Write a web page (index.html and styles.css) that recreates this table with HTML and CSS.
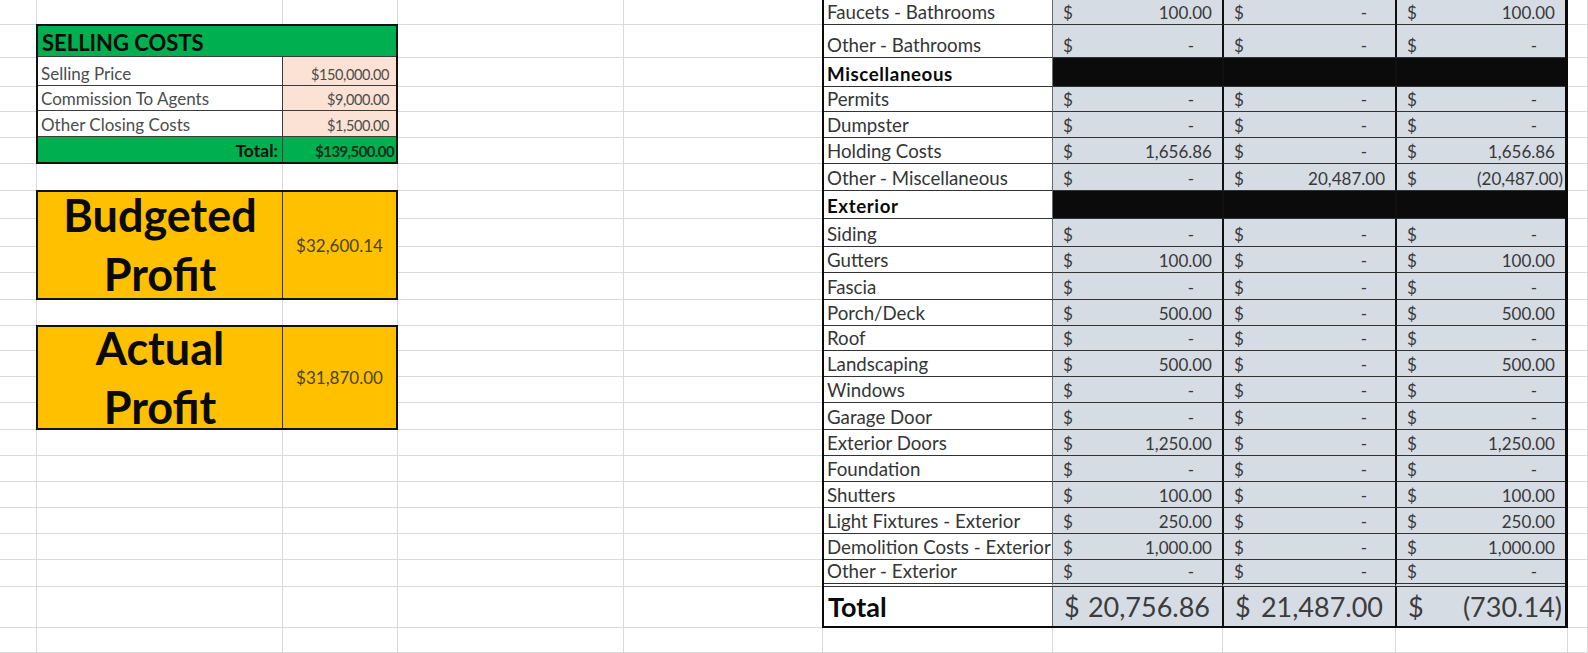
FILE: index.html
```html
<!DOCTYPE html>
<html>
<head>
<meta charset="utf-8">
<link rel="stylesheet" href="styles.css">
</head>
<body>
<div class="sheet">
  <div class="layer rowlines">
    <i></i><i></i><i></i><i></i><i></i><i></i><i></i><i></i><i></i><i></i><i></i><i></i>
    <i></i><i></i><i></i><i></i><i></i><i></i><i></i><i></i><i></i><i></i><i></i><i></i>
  </div>
  <div class="layer collines">
    <i></i><i></i><i></i><i></i><i></i><i></i><i></i><i></i><i></i><i></i>
  </div>
  <div class="layer content">
    <div class="selling">
      <div class="s-head">SELLING COSTS</div>
      <div class="s-lab">Selling Price</div><div class="s-val">$150,000.00</div>
      <div class="s-lab">Commission To Agents</div><div class="s-val">$9,000.00</div>
      <div class="s-lab">Other Closing Costs</div><div class="s-val">$1,500.00</div>
      <div class="s-lab s-tot">Total:</div><div class="s-val s-totval">$139,500.00</div>
    </div>

    <div class="profit budgeted">
      <div class="p-lab">Budgeted<br>Profit</div>
      <div class="p-val">$32,600.14</div>
    </div>

    <div class="profit actual">
      <div class="p-lab">Actual<br>Profit</div>
      <div class="p-val">$31,870.00</div>
    </div>

    <div class="costs">
      <div class="l">Faucets - Bathrooms</div>
      <div class="v k1"><span>$</span><span>100.00</span></div>
      <div class="v"><span>$</span><span class="dash">-</span></div>
      <div class="v"><span>$</span><span>100.00</span></div>

      <div class="l">Other - Bathrooms</div>
      <div class="v k1"><span>$</span><span class="dash">-</span></div>
      <div class="v"><span>$</span><span class="dash">-</span></div>
      <div class="v"><span>$</span><span class="dash">-</span></div>

      <div class="l sec">Miscellaneous</div>
      <div class="blk k1"></div><div class="blk"></div><div class="blk"></div>

      <div class="l">Permits</div>
      <div class="v k1"><span>$</span><span class="dash">-</span></div>
      <div class="v"><span>$</span><span class="dash">-</span></div>
      <div class="v"><span>$</span><span class="dash">-</span></div>

      <div class="l">Dumpster</div>
      <div class="v k1"><span>$</span><span class="dash">-</span></div>
      <div class="v"><span>$</span><span class="dash">-</span></div>
      <div class="v"><span>$</span><span class="dash">-</span></div>

      <div class="l">Holding Costs</div>
      <div class="v k1"><span>$</span><span>1,656.86</span></div>
      <div class="v"><span>$</span><span class="dash">-</span></div>
      <div class="v"><span>$</span><span>1,656.86</span></div>

      <div class="l">Other - Miscellaneous</div>
      <div class="v k1"><span>$</span><span class="dash">-</span></div>
      <div class="v"><span>$</span><span>20,487.00</span></div>
      <div class="v"><span>$</span><span class="neg">(20,487.00)</span></div>

      <div class="l sec">Exterior</div>
      <div class="blk k1"></div><div class="blk"></div><div class="blk"></div>

      <div class="l">Siding</div>
      <div class="v k1"><span>$</span><span class="dash">-</span></div>
      <div class="v"><span>$</span><span class="dash">-</span></div>
      <div class="v"><span>$</span><span class="dash">-</span></div>

      <div class="l">Gutters</div>
      <div class="v k1"><span>$</span><span>100.00</span></div>
      <div class="v"><span>$</span><span class="dash">-</span></div>
      <div class="v"><span>$</span><span>100.00</span></div>

      <div class="l">Fascia</div>
      <div class="v k1"><span>$</span><span class="dash">-</span></div>
      <div class="v"><span>$</span><span class="dash">-</span></div>
      <div class="v"><span>$</span><span class="dash">-</span></div>

      <div class="l">Porch/Deck</div>
      <div class="v k1"><span>$</span><span>500.00</span></div>
      <div class="v"><span>$</span><span class="dash">-</span></div>
      <div class="v"><span>$</span><span>500.00</span></div>

      <div class="l">Roof</div>
      <div class="v k1"><span>$</span><span class="dash">-</span></div>
      <div class="v"><span>$</span><span class="dash">-</span></div>
      <div class="v"><span>$</span><span class="dash">-</span></div>

      <div class="l">Landscaping</div>
      <div class="v k1"><span>$</span><span>500.00</span></div>
      <div class="v"><span>$</span><span class="dash">-</span></div>
      <div class="v"><span>$</span><span>500.00</span></div>

      <div class="l">Windows</div>
      <div class="v k1"><span>$</span><span class="dash">-</span></div>
      <div class="v"><span>$</span><span class="dash">-</span></div>
      <div class="v"><span>$</span><span class="dash">-</span></div>

      <div class="l">Garage Door</div>
      <div class="v k1"><span>$</span><span class="dash">-</span></div>
      <div class="v"><span>$</span><span class="dash">-</span></div>
      <div class="v"><span>$</span><span class="dash">-</span></div>

      <div class="l">Exterior Doors</div>
      <div class="v k1"><span>$</span><span>1,250.00</span></div>
      <div class="v"><span>$</span><span class="dash">-</span></div>
      <div class="v"><span>$</span><span>1,250.00</span></div>

      <div class="l">Foundation</div>
      <div class="v k1"><span>$</span><span class="dash">-</span></div>
      <div class="v"><span>$</span><span class="dash">-</span></div>
      <div class="v"><span>$</span><span class="dash">-</span></div>

      <div class="l">Shutters</div>
      <div class="v k1"><span>$</span><span>100.00</span></div>
      <div class="v"><span>$</span><span class="dash">-</span></div>
      <div class="v"><span>$</span><span>100.00</span></div>

      <div class="l">Light Fixtures - Exterior</div>
      <div class="v k1"><span>$</span><span>250.00</span></div>
      <div class="v"><span>$</span><span class="dash">-</span></div>
      <div class="v"><span>$</span><span>250.00</span></div>

      <div class="l">Demolition Costs - Exterior</div>
      <div class="v k1"><span>$</span><span>1,000.00</span></div>
      <div class="v"><span>$</span><span class="dash">-</span></div>
      <div class="v"><span>$</span><span>1,000.00</span></div>

      <div class="l dbl">Other - Exterior</div>
      <div class="v k1 dbl"><span>$</span><span class="dash">-</span></div>
      <div class="v dbl"><span>$</span><span class="dash">-</span></div>
      <div class="v dbl"><span>$</span><span class="dash">-</span></div>

      <div class="l tot">Total</div>
      <div class="v k1 tot"><span>$</span><span>20,756.86</span></div>
      <div class="v tot"><span>$</span><span>21,487.00</span></div>
      <div class="v tot"><span>$</span><span class="neg">(730.14)</span></div>
    </div>
  </div>
</div>
</body>
</html>
```

FILE: styles.css
```css
* { box-sizing: border-box; }

html, body {
  margin: 0;
  padding: 0;
  background: #ffffff;
  overflow: hidden;
}

body {
  font-family: "Lato", "Carlito", "Open Sans", sans-serif;
  color: #3d3d3d;
}

.sheet {
  display: grid;
  width: 1588px;
  height: 653px;
  overflow: hidden;
}

.layer {
  grid-area: 1 / 1;
  display: grid;
  grid-template-columns: 37px 246px 115px 226px 199px 230px 170px 173px 172px 1fr;
  grid-template-rows: 25px 33px 29px 25px 26px 26px 27px 28px 28px 26px 27px 26px 25px 26px 26px 27px 26px 26px 26px 26px 26px 27px 41px 1fr;
}

.rowlines i {
  grid-column: 1 / -1;
  border-bottom: 1px solid #dadada;
}

.collines {
  grid-auto-flow: column;
}

.collines i {
  grid-row: 1 / -1;
  border-right: 1px solid #dadada;
}

/* ---------- Selling costs ---------- */
.selling {
  grid-column: 2 / 4;
  grid-row: 2 / 7;
  display: grid;
  grid-template-columns: 244px 1fr;
  grid-template-rows: 31px 29px 25px 26px 1fr;
  border: 2px solid #111;
  margin-left: -1px;
  margin-top: -1px;
  background: #fff;
}

.selling > div {
  display: flex;
  align-items: flex-end;
  border-bottom: 1px solid #3c3c3c;
  white-space: nowrap;
  line-height: 1.2;
}

.s-head {
  grid-column: 1 / -1;
  background: #00b050;
  color: #0a0a0a;
  font-weight: 700;
  font-size: 22px;
  padding: 0 0 0 4px;
}

.s-lab {
  font-size: 17px;
  color: #4c4c4c;
  padding: 0 0 1px 3px;
}

.s-val {
  background: #fbe2d4;
  border-left: 1px solid #3c3c3c;
  justify-content: flex-end;
  font-size: 14.5px;
  letter-spacing: -0.4px;
  color: #4c4c4c;
  padding: 0 7px 2px 0;
}

.selling > .s-tot {
  background: #00b050;
  justify-content: flex-end;
  font-weight: 700;
  font-size: 17.5px;
  color: #0f0f0f;
  padding: 0 4px 1px 0;
  border-bottom: none;
}

.selling > .s-totval {
  background: #00b050;
  font-weight: 700;
  font-size: 15px;
  letter-spacing: -0.6px;
  color: #1d2f1d;
  padding: 0 2px 2px 0;
  border-bottom: none;
}

/* ---------- Profit boxes ---------- */
.profit {
  grid-column: 2 / 4;
  display: grid;
  grid-template-columns: 244px 1fr;
  grid-template-rows: minmax(0, 1fr);
  border: 2px solid #111;
  margin-left: -1px;
  margin-top: -1px;
  background: #ffc000;
}

.budgeted { grid-row: 8 / 12; }
.actual { grid-row: 13 / 17; }

.p-lab {
  display: flex;
  align-items: center;
  justify-content: center;
  min-height: 0;
  text-align: center;
  font-weight: 700;
  font-size: 45px;
  line-height: 59px;
  color: #0a0a0a;
  white-space: nowrap;
}

.p-val {
  display: flex;
  align-items: center;
  justify-content: center;
  border-left: 1px solid #333;
  font-size: 17px;
  color: #4b4325;
}

/* ---------- Costs table ---------- */
.costs {
  grid-column: 6 / 10;
  grid-row: 1 / 24;
  display: grid;
  grid-template-columns: 228px 170px 173px 1fr;
  grid-template-rows: 25px 33px 29px 25px 26px 26px 27px 28px 28px 26px 27px 26px 25px 26px 26px 27px 26px 26px 26px 26px 26px 27px 1fr;
  border: 2px solid #0a0a0a;
  border-top: none;
  border-right-width: 3px;
  margin-left: -1px;
  background: #fff;
}

.costs > div {
  display: flex;
  align-items: flex-end;
  border-bottom: 1px solid #333;
  white-space: nowrap;
  overflow: hidden;
  line-height: 1.2;
}

.l {
  font-size: 18.7px;
  color: #353535;
  padding: 0 0 1px 3px;
}

.l.sec {
  font-weight: 700;
  letter-spacing: 0.6px;
  color: #0a0a0a;
}

.v {
  background: #d6dce4;
  justify-content: space-between;
  font-size: 17px;
  color: #383838;
  padding: 0 10px 1px 10px;
  border-left: 2px solid #111;
}

.blk {
  background: #0b0b0b;
  border-left: 2px solid #111;
}

.costs > .k1 {
  border-left: 1px solid #6a6a6a;
}

.dash {
  padding-right: 18px;
}

.neg {
  margin-right: -8px;
}

.costs > .dbl {
  border-bottom: 4px double #333;
}

.costs > .tot {
  border-bottom: none;
  padding-bottom: 3px;
}

.l.tot {
  font-size: 27px;
  font-weight: 700;
  color: #0a0a0a;
  padding-left: 4px;
}

.v.tot {
  font-size: 27px;
  padding-right: 12px;
  padding-left: 11px;
  color: #3c3c3c;
}

.v.tot .neg {
  margin-right: -9px;
}
```
